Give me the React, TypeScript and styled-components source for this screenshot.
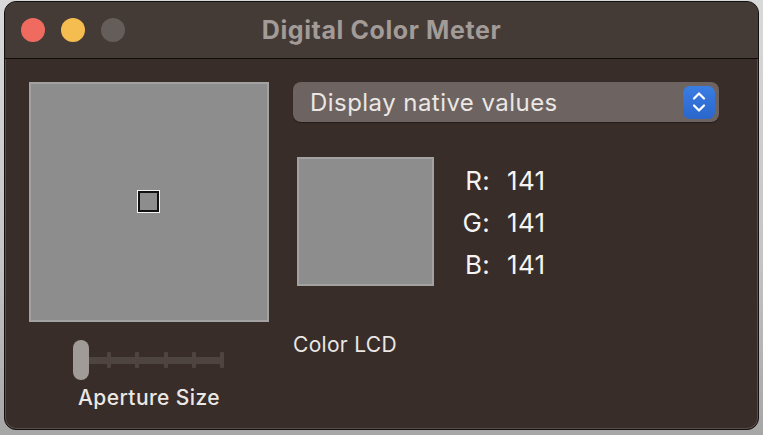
import styled, { createGlobalStyle } from "styled-components";

const GlobalStyle = createGlobalStyle`
    html, body {
        margin: 0;
        padding: 0;
    }
    body {
        width: 763px;
        height: 435px;
        overflow: hidden;
        background: linear-gradient(180deg, #d9d9d9 0%, #c4c4c4 60%, #a6a6a6 100%);
        font-family: Inter, "Noto Sans", "Liberation Sans", sans-serif;
    }
`

const Desktop = styled.div`
    padding: 1px 4px 0 4px;
`

const Window = styled.div`
    width: 755px;
    height: 429px;
    box-sizing: border-box;
    border: 1px solid #141010;
    border-radius: 12px;
    box-shadow: inset 0 0 0 1px rgba(255, 255, 255, 0.16);
    background: #382d29;
    overflow: hidden;
    display: flex;
    flex-direction: column;
`

const TitleBar = styled.div`
    height: 56px;
    flex-shrink: 0;
    background: #443b37;
    border-bottom: 1px solid #0e0b0a;
    display: flex;
    align-items: center;
    position: relative;
    padding-left: 16px;
    gap: 16px;
`

const Light = styled.div<{ $color: string }>`
    width: 24px;
    height: 24px;
    border-radius: 50%;
    background: ${p => p.$color};
`

const Title = styled.div`
    position: absolute;
    left: 0;
    right: 0;
    text-align: center;
    font-size: 25px;
    font-weight: 700;
    letter-spacing: 0.6px;
    color: #a29b97;
    pointer-events: none;
`

const Body = styled.div`
    display: flex;
    padding: 23px 0 0 24px;
    gap: 24px;
`

const LeftColumn = styled.div`
    display: flex;
    flex-direction: column;
    align-items: center;
    width: 240px;
`

const Loupe = styled.div`
    width: 240px;
    height: 240px;
    box-sizing: border-box;
    background: #8d8d8d;
    border: 2px solid #a2a2a2;
    display: flex;
    align-items: center;
    justify-content: center;
`

const Marker = styled.div`
    width: 23px;
    height: 23px;
    box-sizing: border-box;
    border: 1px solid #f4f4f4;
    background: #8d8d8d;
    box-shadow: inset 0 0 0 2px #111;
    margin: -1px 0 0 -2px;
`

const SliderRow = styled.div`
    align-self: flex-start;
    display: flex;
    align-items: center;
    margin: 18px 0 0 44px;
    height: 40px;
`

const Knob = styled.div`
    width: 16px;
    height: 40px;
    border-radius: 8px;
    background: #a19b98;
`

const Track = styled.div`
    display: flex;
    align-items: center;
    justify-content: space-between;
    width: 135px;
    height: 7px;
    background: #4e4440;
    padding: 0 0 0 18px;
    box-sizing: border-box;
`

const Tick = styled.div`
    width: 4px;
    height: 16px;
    border-radius: 1px;
    background: #4e4440;
`

const SliderLabel = styled.div`
    margin-top: 5px;
    font-size: 21px;
    font-weight: 500;
    color: #ebe7e5;
    letter-spacing: 0.4px;
`

const RightColumn = styled.div`
    display: flex;
    flex-direction: column;
    width: 426px;
`

const Popup = styled.div`
    height: 40px;
    border-radius: 8px;
    background: #6d6360;
    box-shadow: 0 1px 1px rgba(0, 0, 0, 0.35);
    display: flex;
    align-items: center;
    justify-content: space-between;
    padding: 0 4px 0 17px;
`

const PopupText = styled.div`
    font-size: 24px;
    letter-spacing: 0.45px;
    color: #ebe7e5;
`

const Stepper = styled.div`
    width: 32px;
    height: 33px;
    border-radius: 7px;
    background: linear-gradient(180deg, #3a7de3 0%, #2a66cc 100%);
    display: flex;
    align-items: center;
    justify-content: center;
`

const Readout = styled.div`
    display: flex;
    align-items: flex-start;
    margin-top: 35px;
    padding-left: 4px;
`

const Swatch = styled.div`
    width: 137px;
    height: 129px;
    box-sizing: border-box;
    background: #8d8d8d;
    border: 2px solid #a2a2a2;
`

const Values = styled.div`
    display: grid;
    grid-template-columns: 56px auto;
    column-gap: 17px;
    row-gap: 14px;
    margin-top: 10px;
    font-size: 26px;
    letter-spacing: 0.3px;
    color: #f6f4f3;
    line-height: 28px;
`

const ChannelLabel = styled.div`
    text-align: right;
`

const Display = styled.div`
    margin-top: 46px;
    font-size: 21px;
    letter-spacing: 0.3px;
    color: #ebe7e5;
`

const channels = ["R", "G", "B"];

export default function App() {
    return (
        <>
            <GlobalStyle />
            <Desktop>
                <Window>
                    <TitleBar>
                        <Light $color="#ef6a5f" />
                        <Light $color="#f5bd4f" />
                        <Light $color="#655d59" />
                        <Title>Digital Color Meter</Title>
                    </TitleBar>
                    <Body>
                        <LeftColumn>
                            <Loupe>
                                <Marker />
                            </Loupe>
                            <SliderRow>
                                <Knob />
                                <Track>
                                    {[0, 1, 2, 3, 4].map(i => <Tick key={i} />)}
                                </Track>
                            </SliderRow>
                            <SliderLabel>Aperture Size</SliderLabel>
                        </LeftColumn>
                        <RightColumn>
                            <Popup>
                                <PopupText>Display native values</PopupText>
                                <Stepper>
                                    <svg width="16" height="24" viewBox="0 0 16 24" fill="none" stroke="#fff" strokeWidth="2.2" strokeLinecap="round" strokeLinejoin="round">
                                        <polyline points="3,8.5 8,3.5 13,8.5" />
                                        <polyline points="3,15.5 8,20.5 13,15.5" />
                                    </svg>
                                </Stepper>
                            </Popup>
                            <Readout>
                                <Swatch />
                                <Values>
                                    {channels.map(c => [
                                        <ChannelLabel key={c + "l"}>{c}:</ChannelLabel>,
                                        <div key={c + "v"}>141</div>,
                                    ])}
                                </Values>
                            </Readout>
                            <Display>Color LCD</Display>
                        </RightColumn>
                    </Body>
                </Window>
            </Desktop>
        </>
    )
}
